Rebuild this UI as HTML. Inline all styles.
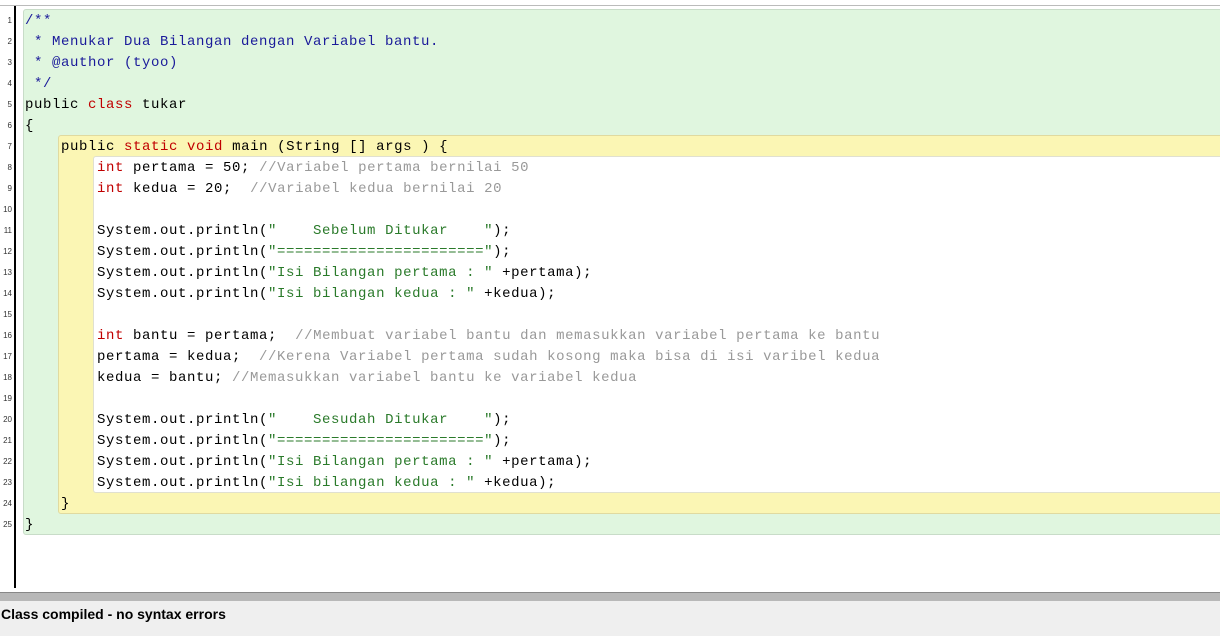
<!DOCTYPE html>
<html><head><style>
body{margin:0;width:1220px;height:636px;position:relative;background:#fff;overflow:hidden;font-family:"Liberation Mono",monospace;}
.gut{position:absolute;left:14px;top:6px;width:2px;height:582px;background:#000;}
.topl{position:absolute;left:0;top:5px;width:1220px;height:1px;background:#bbb;}
.blk{position:absolute;border-radius:3px;}
.g{left:23px;top:9px;width:1200px;height:524px;background:#e0f6df;border:1px solid #c8dcc8;}
.y{left:58px;top:135px;width:1170px;height:377px;background:#fbf6b4;border:1px solid #e0daa0;}
.w{left:93px;top:156px;width:1130px;height:335px;background:#fff;border:1px solid #e0e0d0;}
.ln{position:absolute;left:0;width:12px;text-align:right;font-family:"Liberation Sans",sans-serif;font-size:8px;color:#333;}
.c{position:absolute;white-space:pre;font-size:14px;letter-spacing:0.6px;color:#000;line-height:21px;}
.k{color:#c00000}.s{color:#2a7a2a}.d{color:#1a1a9a}.m{color:#999}
.sep{position:absolute;left:0;top:592px;width:1220px;height:8px;background:#b8b8b8;border-top:1px solid #888;border-bottom:1px solid #666;}
.st{position:absolute;left:0;top:601px;width:1220px;height:35px;background:#efefef;font-family:"Liberation Sans",sans-serif;font-weight:bold;font-size:14px;padding:5px 0 0 1px;box-sizing:border-box;}
</style></head><body>
<div class="topl"></div>
<div class="blk g"></div><div class="blk y"></div><div class="blk w"></div>
<div class="gut"></div>
<div class="ln" style="top:16px">1</div><div class="ln" style="top:37px">2</div><div class="ln" style="top:58px">3</div><div class="ln" style="top:79px">4</div><div class="ln" style="top:100px">5</div><div class="ln" style="top:121px">6</div><div class="ln" style="top:142px">7</div><div class="ln" style="top:163px">8</div><div class="ln" style="top:184px">9</div><div class="ln" style="top:205px">10</div><div class="ln" style="top:226px">11</div><div class="ln" style="top:247px">12</div><div class="ln" style="top:268px">13</div><div class="ln" style="top:289px">14</div><div class="ln" style="top:310px">15</div><div class="ln" style="top:331px">16</div><div class="ln" style="top:352px">17</div><div class="ln" style="top:373px">18</div><div class="ln" style="top:394px">19</div><div class="ln" style="top:415px">20</div><div class="ln" style="top:436px">21</div><div class="ln" style="top:457px">22</div><div class="ln" style="top:478px">23</div><div class="ln" style="top:499px">24</div><div class="ln" style="top:520px">25</div>
<div class="c" style="left:25px;top:11px"><span class="d">/**
 * Menukar Dua Bilangan dengan Variabel bantu.
 * @author (tyoo)
 */</span>
public <span class="k">class</span> tukar
{
    public <span class="k">static</span> <span class="k">void</span> main (String [] args ) {
        <span class="k">int</span> pertama = 50; <span class="m">//Variabel pertama bernilai 50</span>
        <span class="k">int</span> kedua = 20;  <span class="m">//Variabel kedua bernilai 20</span>

        System.out.println(<span class="s">"    Sebelum Ditukar    "</span>);
        System.out.println(<span class="s">"======================="</span>);
        System.out.println(<span class="s">"Isi Bilangan pertama : "</span> +pertama);
        System.out.println(<span class="s">"Isi bilangan kedua : "</span> +kedua);

        <span class="k">int</span> bantu = pertama;  <span class="m">//Membuat variabel bantu dan memasukkan variabel pertama ke bantu</span>
        pertama = kedua;  <span class="m">//Kerena Variabel pertama sudah kosong maka bisa di isi varibel kedua</span>
        kedua = bantu; <span class="m">//Memasukkan variabel bantu ke variabel kedua</span>

        System.out.println(<span class="s">"    Sesudah Ditukar    "</span>);
        System.out.println(<span class="s">"======================="</span>);
        System.out.println(<span class="s">"Isi Bilangan pertama : "</span> +pertama);
        System.out.println(<span class="s">"Isi bilangan kedua : "</span> +kedua);
    }
}</div>
<div class="sep"></div>
<div class="st">Class compiled - no syntax errors</div>
</body></html>
